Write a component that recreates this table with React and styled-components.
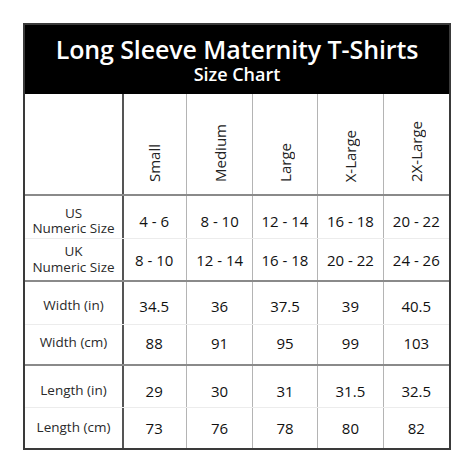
import React from "react";
import styled, { createGlobalStyle } from "styled-components";

const Global = createGlobalStyle`
  html, body { margin: 0; padding: 0; background: #fff; }
  body { font-family: "Open Sans", "Liberation Sans", sans-serif; }
`;

const Page = styled.div`
  width: 474px;
  height: 474px;
  padding: 23px 0 0 23px;
  box-sizing: border-box;
`;

const Chart = styled.div`
  width: 428px;
  box-sizing: border-box;
  border: 2px solid #3a3a3a;
`;

const TitleBar = styled.div`
  height: 69px;
  background: #000;
  color: #fff;
  display: flex;
  flex-direction: column;
  align-items: center;
  justify-content: center;
  gap: 1px;
  padding-top: 1px;
  box-sizing: border-box;
`;

const Title = styled.div`
  font-size: 25px;
  line-height: 27px;
  font-weight: 600;
  letter-spacing: -0.1px;
`;

const Subtitle = styled.div`
  font-size: 18px;
  line-height: 21px;
  font-weight: 600;
`;

const Row = styled.div`
  display: grid;
  grid-template-columns: 97px repeat(5, 1fr);
  height: ${(p) => p.$h}px;
  box-sizing: border-box;
  border-bottom: ${(p) =>
    p.$last ? "none" : p.$group ? "2px solid #8a8a8a" : "1px solid #ececec"};
`;

const Cell = styled.div`
  display: flex;
  align-items: center;
  justify-content: center;
  text-align: center;
  box-sizing: border-box;
  border-right: ${(p) =>
    p.$label ? "2px solid #555" : p.$end ? "none" : "1.5px solid #b4b4b4"};
  width: ${(p) => (p.$label ? "99px" : "auto")};
  padding-top: ${(p) => (p.$shift > 0 ? p.$shift : 0)}px;
  padding-bottom: ${(p) => (p.$shift < 0 ? -p.$shift : 0)}px;
`;

const LabelCell = styled(Cell)`
  color: #2a2a2a;
  font-size: 13.5px;
  line-height: 15.5px;
  flex-direction: column;
`;

const Value = styled(Cell)`
  color: #111;
  font-size: 15px;
  font-weight: 500;
`;

const SizeCell = styled(Cell)`
  align-items: flex-end;
  padding-bottom: 12px;
`;

const Rotated = styled.span`
  writing-mode: vertical-rl;
  transform: rotate(180deg);
  font-size: 15px;
  color: #222;
  line-height: 16px;
`;

const sizes = ["Small", "Medium", "Large", "X-Large", "2X-Large"];

const rows = [
  { label: ["US", "Numeric Size"], vals: ["4 - 6", "8 - 10", "12 - 14", "16 - 18", "20 - 22"], h: 43, group: false, shift: 8 },
  { label: ["UK", "Numeric Size"], vals: ["8 - 10", "12 - 14", "16 - 18", "20 - 22", "24 - 26"], h: 43, group: true, shift: 0 },
  { label: ["Width (in)"], vals: ["34.5", "36", "37.5", "39", "40.5"], h: 43, group: false, shift: 6 },
  { label: ["Width (cm)"], vals: ["88", "91", "95", "99", "103"], h: 41, group: true, shift: -3 },
  { label: ["Length (in)"], vals: ["29", "30", "31", "31.5", "32.5"], h: 42, group: false, shift: 9 },
  { label: ["Length (cm)"], vals: ["73", "76", "78", "80", "82"], h: 40, group: false, last: true, shift: 0 },
];

export default function App() {
  return (
    <Page>
      <Global />
      <Chart>
        <TitleBar>
          <Title>Long Sleeve Maternity T-Shirts</Title>
          <Subtitle>Size Chart</Subtitle>
        </TitleBar>
        <Row $h={102} $group>
          <Cell $label />
          {sizes.map((s, i) => (
            <SizeCell key={s} $end={i === sizes.length - 1}>
              <Rotated>{s}</Rotated>
            </SizeCell>
          ))}
        </Row>
        {rows.map((r, ri) => (
          <Row key={ri} $h={r.h} $group={r.group} $last={r.last}>
            <LabelCell $label $shift={r.shift}>
              {r.label.map((l) => (
                <div key={l}>{l}</div>
              ))}
            </LabelCell>
            {r.vals.map((v, i) => (
              <Value key={i} $end={i === r.vals.length - 1} $shift={r.shift}>
                {v}
              </Value>
            ))}
          </Row>
        ))}
      </Chart>
    </Page>
  );
}
